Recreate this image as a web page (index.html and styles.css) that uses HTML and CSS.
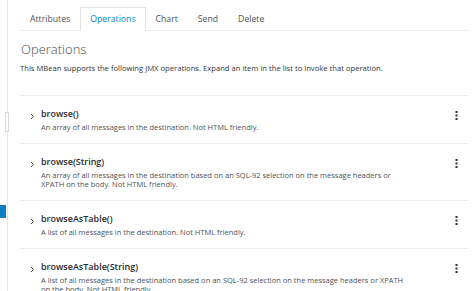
FILE: index.html
```html
<!DOCTYPE html>
<html lang="en">
<head>
  <meta charset="UTF-8">
  <title>MBean Operations</title>
  <link rel="stylesheet" href="styles.css">
</head>
<body>

  <div class="page">
    <aside class="rail">
      <span class="rail-handle"></span>
      <span class="rail-marker"></span>
    </aside>

    <main class="content">
      <ul class="tabs">
        <li class="tab">Attributes</li>
        <li class="tab active">Operations</li>
        <li class="tab">Chart</li>
        <li class="tab">Send</li>
        <li class="tab">Delete</li>
      </ul>

      <h1 class="title">Operations</h1>
      <p class="intro">This MBean supports the following JMX operations. Expand an item in the list to invoke that operation.</p>

      <div class="op-list">
        <div class="op">
          <svg class="chevron" width="5" height="7" viewBox="0 0 5 7"><path d="M1 1l2.5 2.5L1 6" fill="none" stroke="#4d5258" stroke-width="1"/></svg>
          <div class="op-body">
            <div class="op-name">browse()</div>
            <div class="op-desc">An array of all messages in the destination. Not HTML friendly.</div>
          </div>
          <svg class="kebab" width="3" height="9" viewBox="0 0 3 9"><rect x="0.5" y="0" width="2" height="2" fill="#2b2b2b"/><rect x="0.5" y="3.5" width="2" height="2" fill="#2b2b2b"/><rect x="0.5" y="7" width="2" height="2" fill="#2b2b2b"/></svg>
        </div>

        <div class="op">
          <svg class="chevron" width="5" height="7" viewBox="0 0 5 7"><path d="M1 1l2.5 2.5L1 6" fill="none" stroke="#4d5258" stroke-width="1"/></svg>
          <div class="op-body">
            <div class="op-name">browse(String)</div>
            <div class="op-desc">An array of all messages in the destination based on an SQL-92 selection on the message headers or XPATH on the body. Not HTML friendly.</div>
          </div>
          <svg class="kebab" width="3" height="9" viewBox="0 0 3 9"><rect x="0.5" y="0" width="2" height="2" fill="#2b2b2b"/><rect x="0.5" y="3.5" width="2" height="2" fill="#2b2b2b"/><rect x="0.5" y="7" width="2" height="2" fill="#2b2b2b"/></svg>
        </div>

        <div class="op">
          <svg class="chevron" width="5" height="7" viewBox="0 0 5 7"><path d="M1 1l2.5 2.5L1 6" fill="none" stroke="#4d5258" stroke-width="1"/></svg>
          <div class="op-body">
            <div class="op-name">browseAsTable()</div>
            <div class="op-desc">A list of all messages in the destination. Not HTML friendly.</div>
          </div>
          <svg class="kebab" width="3" height="9" viewBox="0 0 3 9"><rect x="0.5" y="0" width="2" height="2" fill="#2b2b2b"/><rect x="0.5" y="3.5" width="2" height="2" fill="#2b2b2b"/><rect x="0.5" y="7" width="2" height="2" fill="#2b2b2b"/></svg>
        </div>

        <div class="op">
          <svg class="chevron" width="5" height="7" viewBox="0 0 5 7"><path d="M1 1l2.5 2.5L1 6" fill="none" stroke="#4d5258" stroke-width="1"/></svg>
          <div class="op-body">
            <div class="op-name">browseAsTable(String)</div>
            <div class="op-desc">A list of all messages in the destination based on an SQL-92 selection on the message headers or XPATH on the body. Not HTML friendly.</div>
          </div>
          <svg class="kebab" width="3" height="9" viewBox="0 0 3 9"><rect x="0.5" y="0" width="2" height="2" fill="#2b2b2b"/><rect x="0.5" y="3.5" width="2" height="2" fill="#2b2b2b"/><rect x="0.5" y="7" width="2" height="2" fill="#2b2b2b"/></svg>
        </div>
      </div>
    </main>
  </div>

</body>
</html>
```

FILE: styles.css
```css
html, body {
  margin: 0;
  height: 100%;
  overflow: hidden;
  background: #fff;
  font-family: "Open Sans", "Liberation Sans", sans-serif;
  color: #363636;
}
.page {
  display: flex;
  height: 100%;
}
.rail {
  width: 7px;
  flex: none;
  border-right: 1px solid #e6e6e6;
  display: flex;
  flex-direction: column;
}
.rail-handle {
  margin: 112px 0 0 5px;
  width: 2px;
  height: 18px;
  border: 1px solid #d9d9d9;
  background: #fff;
}
.rail-marker {
  margin-top: 73px;
  width: 6px;
  height: 13px;
  background: #0a7fc4;
}
.content {
  flex: 1;
  padding: 0 5px 0 12px;
}
.tabs {
  display: flex;
  list-style: none;
  margin: 7px 0 0;
  padding: 0;
  border-bottom: 1px solid #ececec;
}
.tab {
  padding: 0 9px;
  line-height: 22px;
  font-size: 8.7px;
  color: #4d5258;
  border: 1px solid transparent;
  border-bottom: none;
  margin-bottom: -1px;
}
.tab.active {
  background: #fff;
  color: #0088ce;
  border-color: #e3e3e3;
  padding-bottom: 1px;
}
.title {
  margin: 9px 0 0 1px;
  font-size: 13px;
  font-weight: 300;
  line-height: 18px;
  color: #4a4a4a;
}
.intro {
  margin: 5px 0 0;
  font-size: 7.65px;
  line-height: 10px;
  color: #363636;
}
.op-list {
  margin-top: 22px;
}
.op {
  display: flex;
  align-items: flex-start;
  border-top: 1px solid #ededed;
  padding: 11px 11px 11px 10px;
}
.chevron {
  flex: none;
  margin: 6px 6px 0 0;
}
.op-body {
  max-width: 366px;
}
.op-name {
  font-size: 9px;
  font-weight: 600;
  line-height: 13px;
  margin-bottom: 3px;
  color: #2b2b2b;
}
.op-desc {
  font-size: 7.5px;
  line-height: 9px;
  color: #4d5258;
}
.kebab {
  flex: none;
  margin: 4px 0 0 auto;
}
```
